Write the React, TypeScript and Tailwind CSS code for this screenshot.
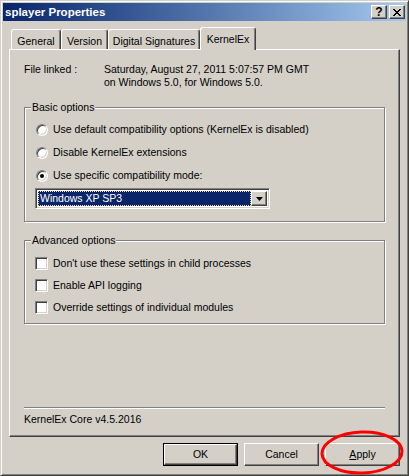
const raised =
  "border border-t-white border-l-white border-r-[#404040] border-b-[#404040] shadow-[inset_-1px_-1px_0_#808080]";
const sunken =
  "border border-t-[#808080] border-l-[#808080] border-r-white border-b-white shadow-[inset_1px_1px_0_#404040,inset_-1px_-1px_0_#d4d0c8]";

function Radio({ checked }: { checked?: boolean }) {
  return (
    <span
      className={`w-[12px] h-[12px] rounded-full bg-white flex items-center justify-center shrink-0 ${sunken}`}
    >
      {checked && <span className="w-[4px] h-[4px] rounded-full bg-black" />}
    </span>
  );
}

function Check() {
  return <span className={`w-[13px] h-[13px] bg-white shrink-0 ${sunken}`} />;
}

function Tab({ label, width, active }: { label: string; width: string; active?: boolean }) {
  if (active) {
    return (
      <div
        className={`${width} h-[23px] -mb-[1px] relative z-10 bg-[#d4d0c8] flex items-center justify-center pt-[1px] rounded-t-[3px] border-l border-t border-r border-l-white border-t-white border-r-[#404040] shadow-[inset_-1px_0_0_#808080]`}
      >
        {label}
      </div>
    );
  }
  return (
    <div
      className={`${width} h-[20px] flex items-center justify-center pt-[3px] rounded-t-[3px] border-l border-t border-r border-l-white border-t-white border-r-[#404040] shadow-[inset_-1px_0_0_#808080]`}
    >
      {label}
    </div>
  );
}

function Button({ children, primary }: { children: React.ReactNode; primary?: boolean }) {
  if (primary) {
    return (
      <div className="w-[75px] h-[23px] border border-black flex">
        <div className={`flex-1 flex items-center justify-center ${raised}`}>{children}</div>
      </div>
    );
  }
  return (
    <div className={`w-[75px] h-[23px] flex items-center justify-center ${raised}`}>{children}</div>
  );
}

export default function App() {
  return (
    <div className="w-[409px] h-[476px] bg-[#d4d0c8] font-['Liberation_Sans',Arial,sans-serif] text-[10.5px] leading-[13px] text-black relative overflow-hidden">
      <div className="w-full h-full border border-t-[#d4d0c8] border-l-[#d4d0c8] border-r-[#404040] border-b-[#404040] shadow-[inset_1px_1px_0_#fff,inset_-1px_-1px_0_#808080] p-[2px] flex flex-col">
        {/* title bar */}
        <div className="h-[18px] bg-linear-to-r from-[#0a246a] to-[#a6caf0] flex items-center pl-[2px] pr-[1px]">
          <span className="text-white font-bold text-[11.5px] flex-1">splayer Properties</span>
          <div className="flex gap-[2px]">
            <div className={`w-[16px] h-[14px] bg-[#d4d0c8] flex items-center justify-center font-bold text-[12px] leading-none ${raised}`}>
              ?
            </div>
            <div className={`w-[16px] h-[14px] bg-[#d4d0c8] flex items-center justify-center ${raised}`}>
              <svg width="8" height="7" viewBox="0 0 8 7">
                <path d="M0 0h2v1h1v1h2V1h1V0h2v1H7v1H6v1H5v1h1v1h1v1h1v1H6V6H5V5H3v1H2v1H0V6h1V5h1V4h1V3H2V2H1V1H0z" fill="#000" />
              </svg>
            </div>
          </div>
        </div>

        <div className="px-[6px] pt-[6px] flex flex-col">
          {/* tabs */}
          <div className="flex items-end h-[22px] pl-[2px]">
            <Tab label="General" width="w-[50px]" />
            <Tab label="Version" width="w-[47px]" />
            <Tab label="Digital Signatures" width="w-[92px]" />
            <Tab label="KernelEx" width="w-[56px]" active />
          </div>

          {/* panel */}
          <div className="h-[388px] border border-l-white border-t-white border-r-[#404040] border-b-[#404040] shadow-[inset_-1px_-1px_0_#808080] px-[14px] pt-[13px] pb-[10px] flex flex-col">
            <div className="grid grid-cols-[80px_1fr]">
              <span>File linked :</span>
              <div className="flex flex-col">
                <span>Saturday, August 27, 2011 5:07:57 PM GMT</span>
                <span>on Windows 5.0, for Windows 5.0.</span>
              </div>
            </div>

            {/* basic options */}
            <div className="relative mt-[18px] w-[361px] border border-[#808080] shadow-[inset_1px_1px_0_#fff,1px_1px_0_#fff] pl-[11px] pt-[10px] pb-[12px]">
              <span className="absolute -top-[7px] left-[6px] px-[1px] bg-[#d4d0c8]">Basic options</span>
              <div className="h-[23px] flex items-center gap-[5px]">
                <Radio />
                <span>Use default compatibility options (KernelEx is disabled)</span>
              </div>
              <div className="h-[23px] flex items-center gap-[5px]">
                <Radio />
                <span>Disable KernelEx extensions</span>
              </div>
              <div className="h-[23px] flex items-center gap-[5px]">
                <Radio checked />
                <span>Use specific compatibility mode:</span>
              </div>
              <div className={`mt-[1px] -ml-[1px] w-[235px] h-[21px] bg-white p-[2px] flex ${sunken}`}>
                <div className="flex-1 bg-[#0a246a] text-white border border-dotted border-[#f5db95] flex items-center pl-[1px]">
                  Windows XP SP3
                </div>
                <div className={`w-[16px] bg-[#d4d0c8] flex items-center justify-center ${raised}`}>
                  <svg width="7" height="4" viewBox="0 0 7 4">
                    <path d="M0 0h7L3.5 4z" fill="#000" />
                  </svg>
                </div>
              </div>
            </div>

            {/* advanced options */}
            <div className="relative mt-[18px] w-[361px] border border-[#808080] shadow-[inset_1px_1px_0_#fff,1px_1px_0_#fff] pl-[10px] pt-[11px] pb-[5px]">
              <span className="absolute -top-[7px] left-[6px] px-[1px] bg-[#d4d0c8]">Advanced options</span>
              <div className="h-[22px] flex items-center gap-[5px]">
                <Check />
                <span>Don't use these settings in child processes</span>
              </div>
              <div className="h-[22px] flex items-center gap-[5px]">
                <Check />
                <span>Enable API logging</span>
              </div>
              <div className="h-[22px] flex items-center gap-[5px]">
                <Check />
                <span>Override settings of individual modules</span>
              </div>
            </div>

            <div className="flex-1" />
            <div className="w-[361px] h-[2px] border-t border-t-[#808080] border-b border-b-white" />
            <span className="mt-[4px]">KernelEx Core v4.5.2016</span>
          </div>

          {/* buttons */}
          <div className="flex justify-end gap-[6px] mt-[6px]">
            <Button primary>OK</Button>
            <Button>Cancel</Button>
            <Button>
              <span>
                <span className="underline">A</span>pply
              </span>
            </Button>
          </div>
        </div>
      </div>

      {/* red marker ellipse */}
      <svg className="absolute left-[319px] top-[430px]" width="86" height="46" viewBox="0 0 86 46">
        <ellipse cx="43" cy="22.5" rx="40" ry="20.5" fill="none" stroke="#ff0000" strokeWidth="3" transform="rotate(-2 43 22.5)" />
      </svg>
    </div>
  );
}
